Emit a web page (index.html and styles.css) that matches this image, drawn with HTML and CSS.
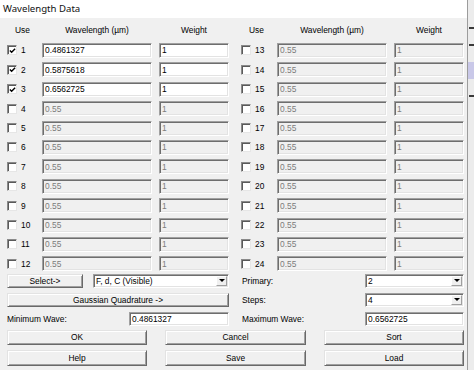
FILE: index.html
```html
<!DOCTYPE html>
<html lang="en">
<head>
  <meta charset="UTF-8">
  <title>Wavelength Data</title>
  <link rel="stylesheet" href="styles.css">
</head>
<body>
  <div class="screen">
    <div class="dialog">
      <div class="titlebar">Wavelength Data</div>

      <div class="tables">
        <div class="half" id="left">
          <div class="head use">Use</div>
          <div class="head">Wavelength (µm)</div>
          <div class="head">Weight</div>
        </div>
        <div class="half" id="right">
          <div class="head use">Use</div>
          <div class="head">Wavelength (µm)</div>
          <div class="head">Weight</div>
        </div>
      </div>

      <div class="controls">
        <div class="pair">
          <div class="btn select">Select-&gt;</div>
          <div class="combo grow"><span class="val">F, d, C (Visible)</span><span class="arrow"></span></div>
        </div>
        <div class="pair">
          <div class="label">Primary:</div>
          <div class="combo side"><span class="val">2</span><span class="arrow"></span></div>
        </div>

        <div class="pair">
          <div class="btn grow">Gaussian Quadrature -&gt;</div>
        </div>
        <div class="pair">
          <div class="label">Steps:</div>
          <div class="combo side"><span class="val">4</span><span class="arrow"></span></div>
        </div>

        <div class="pair">
          <div class="label">Minimum Wave:</div>
          <div class="field on wave">0.4861327</div>
        </div>
        <div class="pair">
          <div class="label">Maximum Wave:</div>
          <div class="field on side">0.6562725</div>
        </div>
      </div>

      <div class="buttons">
        <div class="btn">OK</div>
        <div class="btn">Cancel</div>
        <div class="btn">Sort</div>
        <div class="btn tall">Help</div>
        <div class="btn tall">Save</div>
        <div class="btn tall">Load</div>
      </div>
    </div>

    <div class="strip">
      <div class="mark m1"></div>
      <div class="mark m2"></div>
      <div class="mark lav"></div>
      <div class="mark m3"></div>
    </div>
  </div>

  <script>
    const used = { 1: '0.4861327', 2: '0.5875618', 3: '0.6562725' };

    function addRow(half, n) {
      const on = used[n] !== undefined;
      const use = document.createElement('div');
      use.className = 'usecell';
      use.innerHTML = '<span class="check">' +
        (on ? '<svg width="8" height="8" viewBox="0 0 8 8"><path d="M1 3.5 L3 5.5 L7 1.5" fill="none" stroke="#000" stroke-width="1.6"/></svg>' : '') +
        '</span><span class="num">' + n + '</span>';
      const wave = document.createElement('div');
      wave.className = 'field' + (on ? ' on' : '');
      wave.textContent = on ? used[n] : '0.55';
      const weight = document.createElement('div');
      weight.className = 'field' + (on ? ' on' : '');
      weight.textContent = '1';
      half.append(use, wave, weight);
    }

    const left = document.getElementById('left');
    const right = document.getElementById('right');
    for (let i = 1; i <= 12; i++) addRow(left, i);
    for (let i = 13; i <= 24; i++) addRow(right, i);
  </script>
</body>
</html>
```

FILE: styles.css
```css
body { margin: 0; background: #f0f0f0; font-family: "Liberation Sans", Arial, sans-serif; font-size: 8.4px; color: #000; }
.screen { display: flex; width: 474px; height: 370px; overflow: hidden; }
.dialog { width: 467px; background: #f0f0f0; }
.titlebar { height: 18px; background: #fff; padding-left: 3px; font-family: "Noto Sans", sans-serif; font-size: 9.6px; line-height: 18px; color: #111; }

.tables { display: flex; gap: 12px; padding: 6px 3px 0 7px; }
.half { display: grid; grid-template-columns: 28px 110px 70px; column-gap: 7px; grid-template-rows: 14.6px; grid-auto-rows: 15px; row-gap: 4.4px; }
.half + .half { grid-template-columns: 29px 110px 70px; }
.head { text-align: center; line-height: 13px; }
.head.use { text-align: left; padding-left: 8px; }

.usecell { display: flex; align-items: center; gap: 4px; }
.check { width: 10px; height: 10px; box-sizing: border-box; background: #fff; border-top: 1px solid #8a8a8a; border-left: 1px solid #8a8a8a; border-right: 1px solid #e6e6e6; border-bottom: 1px solid #e6e6e6; box-shadow: inset 1px 1px 0 #5a5a5a; display: flex; align-items: center; justify-content: center; }
.check svg { margin: 1px 0 0 1px; }

.field { box-sizing: border-box; display: flex; align-items: center; padding-left: 2px; background: #f0f0f0; color: #7c7c7c; border-top: 1px solid #a0a0a0; border-left: 1px solid #a0a0a0; border-right: 1px solid #fff; border-bottom: 1px solid #fff; box-shadow: inset 1px 1px 0 #6e6e6e, inset -1px -1px 0 #e3e3e3; white-space: nowrap; }
.field.on { background: #fff; color: #000; }

.controls { display: grid; grid-template-columns: 222px 223px; column-gap: 12px; row-gap: 5px; grid-auto-rows: 14px; padding: 2.6px 3px 0 7px; }
.pair { display: flex; align-items: center; }
.label { flex: 1; }
.controls .pair:nth-child(even) .label { padding-left: 1px; }
.grow { flex: 1; }
.side { width: 99px; height: 100%; }
.wave { width: 100px; height: 100%; }

.btn { box-sizing: border-box; height: 100%; display: flex; align-items: center; justify-content: center; background: #f0f0f0; border-top: 1px solid #e3e3e3; border-left: 1px solid #e3e3e3; border-right: 1px solid #696969; border-bottom: 1px solid #696969; box-shadow: inset 1px 1px 0 #fff, inset -1px -1px 0 #a0a0a0; white-space: nowrap; }
.select { width: 76px; margin-right: 10px; }

.combo { box-sizing: border-box; height: 100%; display: flex; align-items: stretch; background: #fff; border-top: 1px solid #a0a0a0; border-left: 1px solid #a0a0a0; border-right: 1px solid #fff; border-bottom: 1px solid #fff; box-shadow: inset 1px 1px 0 #6e6e6e, inset -1px -1px 0 #e3e3e3; padding: 1px; }
.combo .val { flex: 1; display: flex; align-items: center; padding-left: 1px; }
.arrow { width: 11px; box-sizing: border-box; background: #f0f0f0; border-top: 1px solid #fff; border-left: 1px solid #fff; border-right: 1px solid #a0a0a0; border-bottom: 1px solid #a0a0a0; display: flex; align-items: center; justify-content: center; }
.arrow::after { content: ""; border-left: 3px solid transparent; border-right: 3px solid transparent; border-top: 3px solid #000; }

.buttons { display: grid; grid-template-columns: 140px 141px 140px; column-gap: 18px; row-gap: 5px; grid-template-rows: 15px 16px; padding: 4px 3px 0 7px; }

.strip { width: 7px; box-sizing: border-box; border-left: 1px solid #9c9c9c; background: #ececec; }
.mark { height: 2px; background: #3a3a3a; margin-left: 1px; }
.m1 { margin-top: 27px; }
.m2 { margin-top: 15px; }
.lav { height: 17px; margin-top: 16px; background: #c9c8e8; margin-left: 0; }
.m3 { margin-top: 16px; }
```
